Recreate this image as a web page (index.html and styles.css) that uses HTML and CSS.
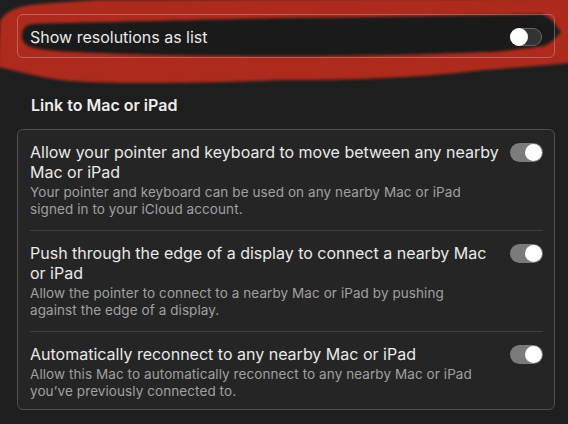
FILE: index.html
```
<!DOCTYPE html>
<html>
<head>
<meta charset="utf-8">
<link rel="stylesheet" href="styles.css">
</head>
<body>
<div class="page">
  <div class="card card-top">
    <span class="title">Show resolutions as list</span>
    <span class="toggle toggle-off"><span class="knob"></span></span>
  </div>
  <svg class="marker" width="568" height="92" viewBox="0 0 568 92">
    <defs>
      <filter id="soft" x="-5%" y="-20%" width="110%" height="140%">
        <feGaussianBlur stdDeviation="1.6"/>
      </filter>
    </defs>
    <path filter="url(#soft)" fill="#ad291b" fill-rule="evenodd"
      d="M 0,22 C 4,12 16,6 40,4 C 60,2 80,1 100,0 L 570,-2 L 570,63 C 540,66 510,68 484,70 C 440,75 410,77 384,78 C 340,80 310,80 284,80 C 230,82 200,83 150,83 C 100,83 80,82 60,80 C 40,77 20,72 -2,67 Z
         M 22,36 C 22,28 26,25 32,24 C 100,22 200,20 284,18 C 400,17 500,15 540,14 C 550,15 556,25 561,32 C 556,38 550,44 544,46 C 520,49 500,52 484,52 C 440,54 400,55 384,55 C 340,56 300,56 284,56 C 200,56 150,55 100,53 C 60,52 40,50 30,47 C 24,44 22,40 22,36 Z"/>
  </svg>

  <h2 class="heading">Link to Mac or iPad</h2>

  <div class="card card-list">
    <div class="row">
      <div class="text">
        <div class="title">Allow your pointer and keyboard to move between any nearby<br>Mac or iPad</div>
        <div class="sub">Your pointer and keyboard can be used on any nearby Mac or iPad<br>signed in to your iCloud account.</div>
      </div>
      <span class="toggle toggle-on"><span class="knob"></span></span>
    </div>
    <div class="divider"></div>
    <div class="row">
      <div class="text">
        <div class="title">Push through the edge of a display to connect a nearby Mac<br>or iPad</div>
        <div class="sub">Allow the pointer to connect to a nearby Mac or iPad by pushing<br>against the edge of a display.</div>
      </div>
      <span class="toggle toggle-on"><span class="knob"></span></span>
    </div>
    <div class="divider"></div>
    <div class="row row-last">
      <div class="text">
        <div class="title">Automatically reconnect to any nearby Mac or iPad</div>
        <div class="sub">Allow this Mac to automatically reconnect to any nearby Mac or iPad<br>you’ve previously connected to.</div>
      </div>
      <span class="toggle toggle-on"><span class="knob"></span></span>
    </div>
  </div>
</div>
</body>
</html>
```
FILE: styles.css
```
* { box-sizing: border-box; }
html, body {
  margin: 0;
  padding: 0;
  background: #1e1e1e;
  width: 568px;
  height: 424px;
  overflow: hidden;
}
body {
  font-family: Inter, "Noto Sans", "DejaVu Sans", sans-serif;
  color: #e6e6e6;
  -webkit-font-smoothing: antialiased;
}
.page {
  position: relative;
  padding: 14px 13px 0 17px;
}
.card {
  border: 1px solid #4f4f4f;
  border-radius: 6px;
  background: #252525;
}
.card-top {
  position: relative;
  height: 44px;
  display: flex;
  align-items: center;
  justify-content: space-between;
  padding: 1px 12px 0 12px;
  background: #1a1a1a;
  border-color: transparent;
}
.card-top::after {
  content: "";
  position: absolute;
  left: -1px;
  top: -1px;
  right: -1px;
  bottom: -1px;
  border: 1px solid rgba(220, 220, 220, 0.32);
  border-radius: 6px;
  z-index: 2;
  pointer-events: none;
}
.title {
  font-size: 16px;
  line-height: 20px;
  color: #e9e9e9;
  letter-spacing: 0;
  white-space: nowrap;
}
.marker {
  position: absolute;
  left: 0;
  top: 0;
  z-index: 1;
  pointer-events: none;
}
.heading {
  margin: 0;
  padding: 37px 0 0 14px;
  height: 71px;
  font-size: 16px;
  font-weight: 600;
  line-height: 20px;
  color: #ececec;
}
.card-list {
  height: 281px;
}
.row {
  display: flex;
  justify-content: space-between;
  align-items: flex-start;
  padding: 12px 11px 12px 12px;
}
.row-last {
  padding-bottom: 10px;
}
.text {
  flex: 1;
}
.sub {
  margin-top: 2px;
  font-size: 13.5px;
  line-height: 17px;
  letter-spacing: 0.08px;
  color: #a0a0a0;
  white-space: nowrap;
}
.divider {
  height: 1px;
  margin: 0 11px 0 12px;
  background: #3e3e3e;
}
.toggle {
  position: relative;
  display: block;
  width: 33px;
  height: 19px;
  border-radius: 10px;
  flex: none;
  margin-top: 1px;
}
.toggle-on {
  background: #7b7b7b;
}
.toggle-off {
  width: 32px;
  height: 18px;
  background: #333333;
  border: 1px solid #666666;
  margin-top: 0;
}
.knob {
  position: absolute;
  top: 1px;
  width: 17px;
  height: 17px;
  border-radius: 50%;
  background: #ffffff;
}
.toggle-on .knob { right: 1px; }
.toggle-off .knob { left: -1px; top: -1px; width: 18px; height: 18px; }
```
